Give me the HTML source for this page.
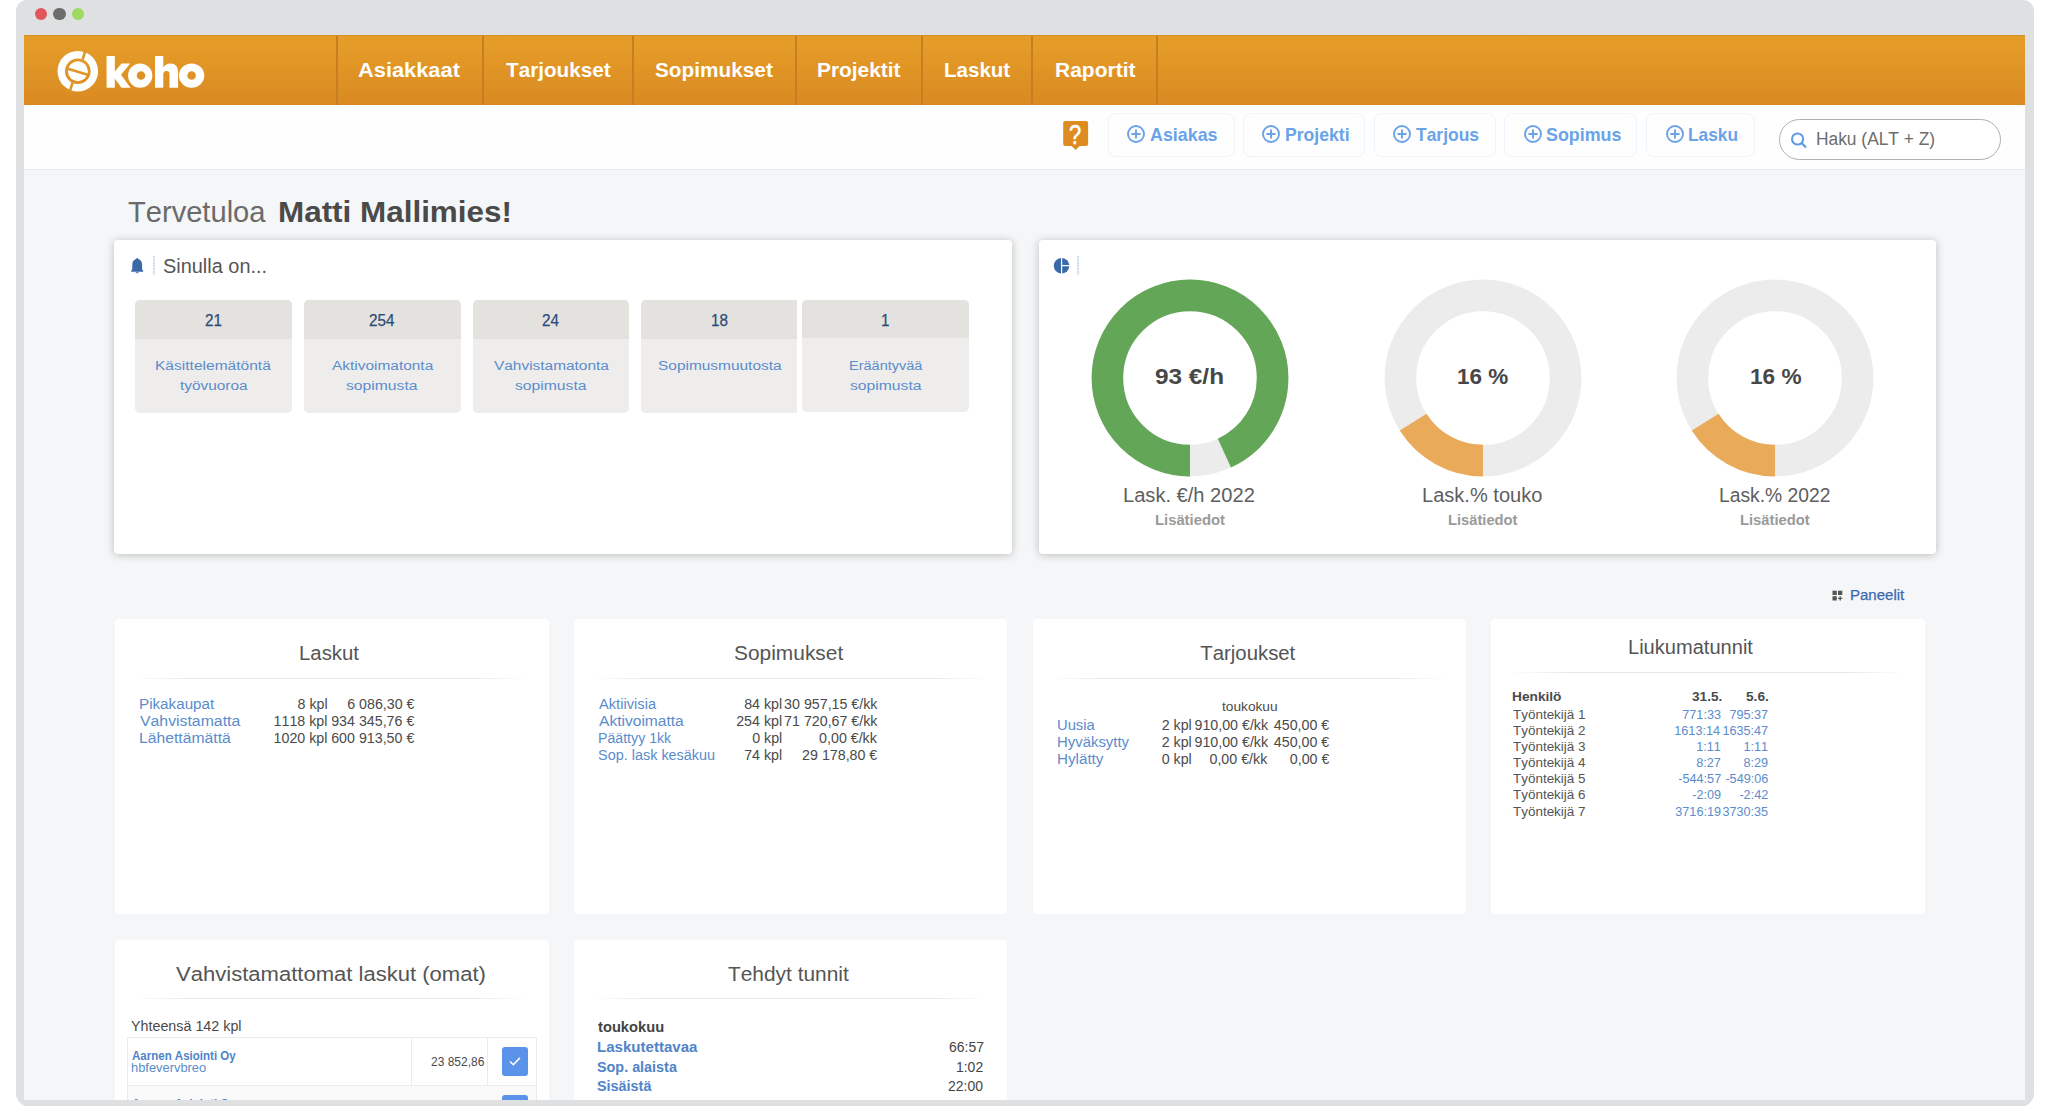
<!DOCTYPE html>
<html><head><meta charset="utf-8"><title>koho</title>
<style>
html,body{margin:0;padding:0;background:#fff;width:2048px;height:1106px;overflow:hidden;position:relative}
.r{position:absolute}
.t{position:absolute;white-space:nowrap;line-height:normal;transform-origin:0 0;font-family:"Liberation Sans",sans-serif;font-kerning:none}
svg.r{overflow:visible}
</style></head><body>
<div class="r" style="left:16px;top:0px;width:2018.2px;height:1107px;background:#dfe0e2;border-radius:11px 11px 14px 14px;"></div>
<div class="r" style="left:34.6px;top:8.0px;width:12.4px;height:12.4px;border-radius:50%;background:#e0565a"></div>
<div class="r" style="left:53.3px;top:8.0px;width:12.4px;height:12.4px;border-radius:50%;background:#6c6d6c"></div>
<div class="r" style="left:72.0px;top:8.0px;width:12.4px;height:12.4px;border-radius:50%;background:#9ed960"></div>
<div class="r" style="left:24px;top:35px;width:2001px;height:1065px;background:#f5f6f7;"></div>
<div class="r" style="left:24px;top:35px;width:2001px;height:70px;background:linear-gradient(#e69e28,#d98a22);"></div>
<div class="r" style="left:24px;top:35px;width:2001px;height:1.2000000000000028px;background:#d48f22;"></div>
<div class="r" style="left:335.9px;top:36px;width:2.0px;height:69px;background:#c57f20;"></div>
<div class="r" style="left:481.6px;top:36px;width:2.0px;height:69px;background:#c57f20;"></div>
<div class="r" style="left:632.2px;top:36px;width:2.0px;height:69px;background:#c57f20;"></div>
<div class="r" style="left:795.2px;top:36px;width:2.0px;height:69px;background:#c57f20;"></div>
<div class="r" style="left:921.4px;top:36px;width:2.0px;height:69px;background:#c57f20;"></div>
<div class="r" style="left:1031.1px;top:36px;width:2.0px;height:69px;background:#c57f20;"></div>
<div class="r" style="left:1156.1px;top:36px;width:2.0px;height:69px;background:#c57f20;"></div>
<div class="r" style="left:24px;top:105px;width:2001px;height:64px;background:#fefefe;"></div>
<div class="r" style="left:24px;top:169px;width:2001px;height:1px;background:#e8e9ea;"></div>
<div class="t" style="left:358.44px;top:58.02px;font-size:20.64px;color:#fff;font-weight:700;transform:scaleX(1.0579);">Asiakkaat</div>
<div class="t" style="left:505.60px;top:58.02px;font-size:20.64px;color:#fff;font-weight:700;transform:scaleX(1.0038);">Tarjoukset</div>
<div class="t" style="left:654.59px;top:58.02px;font-size:20.64px;color:#fff;font-weight:700;transform:scaleX(1.0078);">Sopimukset</div>
<div class="t" style="left:817.09px;top:58.02px;font-size:20.64px;color:#fff;font-weight:700;transform:scaleX(1.0111);">Projektit</div>
<div class="t" style="left:944.30px;top:58.02px;font-size:20.64px;color:#fff;font-weight:700;transform:scaleX(0.9954);">Laskut</div>
<div class="t" style="left:1054.58px;top:58.02px;font-size:20.64px;color:#fff;font-weight:700;transform:scaleX(1.0179);">Raportit</div>
<svg class="r" style="left:0;top:0" width="260" height="110" viewBox="0 0 260 110">
<g fill="#fff">
<path fill-rule="evenodd" d="M77.8 50.9a20.3 20.3 0 1 1 0 40.6a20.3 20.3 0 1 1 0-40.6zM77.8 58.4a12.8 12.8 0 1 0 0 25.6a12.8 12.8 0 1 0 0-25.6z"/>
<circle cx="77.9" cy="71.2" r="10"/>
</g>
<g stroke="#e09525" fill="none">
<line x1="67" y1="68.5" x2="88.5" y2="75" stroke-width="2.6"/>
<line x1="85.6" y1="50" x2="82.6" y2="59.5" stroke-width="2.6"/>
<line x1="72.6" y1="82.5" x2="69.6" y2="92" stroke-width="2.6"/>
</g>
<g fill="#fff">
<rect x="106.6" y="56" width="8.2" height="31.7"/>
<path d="M114 72.5 L121.5 63.4 L130.2 63.4 L121 74.8 L130.5 87.7 L121.5 87.7 L114 77.5z"/>
<path fill-rule="evenodd" d="M140.2 63.4a12.15 12.15 0 1 1 0 24.3a12.15 12.15 0 1 1 0-24.3zM141 71.2a4.3 4.3 0 1 0 0 8.6a4.3 4.3 0 1 0 0-8.6z"/>
<rect x="155" y="56" width="8.3" height="31.7"/>
<path d="M162 69 Q165 63.4 170.5 63.4 Q178.1 63.4 178.1 72 L178.1 87.7 L169.5 87.7 L169.5 74 Q169.5 71 166.5 71 Q163.3 71 163.3 74z"/>
<path fill-rule="evenodd" d="M191.6 63.4a12.7 12.15 0 1 1 0 24.3a12.7 12.15 0 1 1 0-24.3zM191.6 71.2a4.3 4.3 0 1 0 0 8.6a4.3 4.3 0 1 0 0-8.6z"/>
</g></svg>
<svg class="r" style="left:1060px;top:118px" width="32" height="36" viewBox="1060 118 32 36">
<path d="M1065.2 121.1h20.9a2 2 0 0 1 2 2v20.9a2 2 0 0 1-2 2h-6.5l-4 3.9l-4-3.9h-6.4a2 2 0 0 1-2-2v-20.9a2 2 0 0 1 2-2z" fill="#de8b22"/>
</svg>
<div class="t" style="left:1069.41px;top:118.81px;font-size:27.62px;color:#fff;transform:scaleX(0.7929);-webkit-text-stroke:0.6px #fff;">?</div>
<div class="r" style="left:1108.1px;top:113.3px;width:126.5px;height:43.39999999999999px;border:1px solid #eef4fb;border-radius:8px;box-sizing:border-box;"></div>
<svg class="r" style="left:1126.4px;top:124.4px" width="20" height="20" viewBox="-10 -10 20 20"><circle r="8" fill="none" stroke="#6aa3e8" stroke-width="1.9"/><path d="M-4.6 0H4.6M0 -4.6V4.6" stroke="#6aa3e8" stroke-width="1.9"/></svg>
<div class="t" style="left:1149.99px;top:124.55px;font-size:17.73px;color:#6aa3e8;font-weight:700;transform:scaleX(1.0077);">Asiakas</div>
<div class="r" style="left:1243px;top:113.3px;width:122.09999999999991px;height:43.39999999999999px;border:1px solid #eef4fb;border-radius:8px;box-sizing:border-box;"></div>
<svg class="r" style="left:1261.0px;top:124.4px" width="20" height="20" viewBox="-10 -10 20 20"><circle r="8" fill="none" stroke="#6aa3e8" stroke-width="1.9"/><path d="M-4.6 0H4.6M0 -4.6V4.6" stroke="#6aa3e8" stroke-width="1.9"/></svg>
<div class="t" style="left:1284.51px;top:124.55px;font-size:17.73px;color:#6aa3e8;font-weight:700;transform:scaleX(0.9937);">Projekti</div>
<div class="r" style="left:1373.5px;top:113.3px;width:122.20000000000005px;height:43.39999999999999px;border:1px solid #eef4fb;border-radius:8px;box-sizing:border-box;"></div>
<svg class="r" style="left:1392.2px;top:124.4px" width="20" height="20" viewBox="-10 -10 20 20"><circle r="8" fill="none" stroke="#6aa3e8" stroke-width="1.9"/><path d="M-4.6 0H4.6M0 -4.6V4.6" stroke="#6aa3e8" stroke-width="1.9"/></svg>
<div class="t" style="left:1416.20px;top:124.55px;font-size:17.73px;color:#6aa3e8;font-weight:700;transform:scaleX(0.9841);">Tarjous</div>
<div class="r" style="left:1504.3px;top:113.3px;width:133.10000000000014px;height:43.39999999999999px;border:1px solid #eef4fb;border-radius:8px;box-sizing:border-box;"></div>
<svg class="r" style="left:1522.7px;top:124.4px" width="20" height="20" viewBox="-10 -10 20 20"><circle r="8" fill="none" stroke="#6aa3e8" stroke-width="1.9"/><path d="M-4.6 0H4.6M0 -4.6V4.6" stroke="#6aa3e8" stroke-width="1.9"/></svg>
<div class="t" style="left:1545.89px;top:124.55px;font-size:17.73px;color:#6aa3e8;font-weight:700;transform:scaleX(1.0068);">Sopimus</div>
<div class="r" style="left:1645.9px;top:113.3px;width:108.89999999999986px;height:43.39999999999999px;border:1px solid #eef4fb;border-radius:8px;box-sizing:border-box;"></div>
<svg class="r" style="left:1664.6px;top:124.4px" width="20" height="20" viewBox="-10 -10 20 20"><circle r="8" fill="none" stroke="#6aa3e8" stroke-width="1.9"/><path d="M-4.6 0H4.6M0 -4.6V4.6" stroke="#6aa3e8" stroke-width="1.9"/></svg>
<div class="t" style="left:1687.82px;top:124.55px;font-size:17.73px;color:#6aa3e8;font-weight:700;transform:scaleX(0.9776);">Lasku</div>
<div class="r" style="left:1779px;top:118.7px;width:222.29999999999995px;height:40.999999999999986px;border:1.6px solid #b0b0b0;border-radius:21px;box-sizing:border-box;background:#fff;"></div>
<svg class="r" style="left:1787.5px;top:128.5px" width="22" height="22" viewBox="0 0 22 22"><circle cx="9.6" cy="10" r="5.6" fill="none" stroke="#5d9be6" stroke-width="2"/><path d="M13.6 14L18 18.6" stroke="#5d9be6" stroke-width="2.2"/></svg>
<div class="t" style="left:1815.86px;top:128.29px;font-size:18.46px;color:#6d6d6d;transform:scaleX(0.9416);">Haku (ALT + Z)</div>
<div class="t" style="left:128.21px;top:195.20px;font-size:29.51px;color:#6a6a6a;transform:scaleX(0.9863);">Tervetuloa</div>
<div class="t" style="left:278.17px;top:195.20px;font-size:29.51px;color:#4a4a4a;font-weight:700;transform:scaleX(1.0651);">Matti Mallimies!</div>
<div class="r" style="left:114.4px;top:239.9px;width:897.6px;height:313.80000000000007px;background:#fff;border-radius:4px;box-shadow:0 1px 9px rgba(0,0,0,.24);"></div>
<svg class="r" style="left:128px;top:255px" width="20" height="22" viewBox="128 255 20 22">
<path d="M137.2 258.1c.6 0 1 .4 1 .9c2.4.7 3.9 2.9 3.9 5.4v4.6l1.4 2.8h-12.6l1.4-2.8v-4.6c0-2.5 1.5-4.7 3.9-5.4c0-.5.4-.9 1-.9z" fill="#3a69a8"/>
<path d="M135.5 272.2h3.4a1.7 1.1 0 0 1-3.4 0z" fill="#3a69a8"/>
</svg>
<div class="r" style="left:153px;top:256px;width:2px;height:18.600000000000023px;background:repeating-linear-gradient(#d0ddf2 0 2px,#edf2fa 2px 3px);"></div>
<div class="t" style="left:162.97px;top:255.71px;font-size:19.33px;color:#555;transform:scaleX(1.0306);">Sinulla on...</div>
<div class="r" style="left:135.1px;top:300.3px;width:157.29999999999998px;height:112.80000000000001px;background:#eeedeb;border-radius:5px;overflow:hidden;"></div>
<div class="r" style="left:135.1px;top:300.3px;width:157.29999999999998px;height:38.30000000000001px;background:#e3e2de;border-radius:5px 5px 0 0;"></div>
<div class="t" style="left:204.76px;top:311.10px;font-size:16.57px;color:#2d4b78;transform:scaleX(0.9200);-webkit-text-stroke:0.25px #2d4b78;">21</div>
<div class="t" style="left:154.86px;top:358.04px;font-size:13.66px;color:#5b8ccb;transform:scaleX(1.1386);">Käsittelemätöntä</div>
<div class="t" style="left:179.60px;top:377.64px;font-size:13.66px;color:#5b8ccb;transform:scaleX(1.1250);">työvuoroa</div>
<div class="r" style="left:303.5px;top:300.3px;width:157.7px;height:112.80000000000001px;background:#eeedeb;border-radius:5px;overflow:hidden;"></div>
<div class="r" style="left:303.5px;top:300.3px;width:157.7px;height:38.30000000000001px;background:#e3e2de;border-radius:5px 5px 0 0;"></div>
<div class="t" style="left:368.61px;top:311.10px;font-size:16.57px;color:#2d4b78;transform:scaleX(0.9200);-webkit-text-stroke:0.25px #2d4b78;">254</div>
<div class="t" style="left:331.70px;top:358.04px;font-size:13.66px;color:#5b8ccb;transform:scaleX(1.1300);">Aktivoimatonta</div>
<div class="t" style="left:345.85px;top:377.64px;font-size:13.66px;color:#5b8ccb;transform:scaleX(1.1492);">sopimusta</div>
<div class="r" style="left:472.5px;top:300.3px;width:156.89999999999998px;height:112.80000000000001px;background:#eeedeb;border-radius:5px;overflow:hidden;"></div>
<div class="r" style="left:472.5px;top:300.3px;width:156.89999999999998px;height:38.30000000000001px;background:#e3e2de;border-radius:5px 5px 0 0;"></div>
<div class="t" style="left:542.41px;top:311.10px;font-size:16.57px;color:#2d4b78;transform:scaleX(0.9200);-webkit-text-stroke:0.25px #2d4b78;">24</div>
<div class="t" style="left:493.70px;top:358.04px;font-size:13.66px;color:#5b8ccb;transform:scaleX(1.1294);">Vahvistamatonta</div>
<div class="t" style="left:515.05px;top:377.64px;font-size:13.66px;color:#5b8ccb;transform:scaleX(1.1492);">sopimusta</div>
<div class="r" style="left:641.3px;top:300.3px;width:155.60000000000002px;height:112.80000000000001px;background:#eeedeb;border-radius:5px 0 0 5px;overflow:hidden;"></div>
<div class="r" style="left:641.3px;top:300.3px;width:155.60000000000002px;height:38.30000000000001px;background:#e3e2de;border-radius:5px 0 0 0;"></div>
<div class="t" style="left:711.16px;top:311.10px;font-size:16.57px;color:#2d4b78;transform:scaleX(0.9200);-webkit-text-stroke:0.25px #2d4b78;">18</div>
<div class="t" style="left:658.07px;top:358.04px;font-size:13.66px;color:#5b8ccb;transform:scaleX(1.1306);">Sopimusmuutosta</div>
<div class="r" style="left:802.4px;top:300.3px;width:166.89999999999998px;height:112.0px;background:#eeedeb;border-radius:5px;overflow:hidden;"></div>
<div class="r" style="left:802.4px;top:300.3px;width:166.89999999999998px;height:37.599999999999966px;background:#e3e2de;border-radius:5px 5px 0 0;"></div>
<div class="t" style="left:880.60px;top:311.10px;font-size:16.57px;color:#2d4b78;transform:scaleX(0.9200);-webkit-text-stroke:0.25px #2d4b78;">1</div>
<div class="t" style="left:848.64px;top:358.04px;font-size:13.66px;color:#5b8ccb;transform:scaleX(1.0632);">Erääntyvää</div>
<div class="t" style="left:849.65px;top:377.64px;font-size:13.66px;color:#5b8ccb;transform:scaleX(1.1492);">sopimusta</div>
<div class="r" style="left:1038.6px;top:239.8px;width:897.6000000000001px;height:313.8px;background:#fff;border-radius:4px;box-shadow:0 1px 9px rgba(0,0,0,.24);"></div>
<svg class="r" style="left:1050px;top:255px" width="22" height="22" viewBox="1050 255 22 22">
<path d="M1061 257.92A7.8 7.8 0 0 0 1061 273.48Z" fill="#3a69a8"/>
<path d="M1062.2 257.95A7.8 7.8 0 0 1 1069.37 265H1062.2Z" fill="#3a69a8"/>
<path d="M1062.2 266.2H1069.3A7.8 7.8 0 0 1 1062.2 273.45Z" fill="#3a69a8"/>
</svg>
<div class="r" style="left:1077px;top:256px;width:2px;height:18.600000000000023px;background:repeating-linear-gradient(#d0ddf2 0 2px,#edf2fa 2px 3px);"></div>
<svg class="r" style="left:1089.9px;top:277.6px" width="200" height="200" viewBox="-100 -100 200 200"><circle r="82.6" fill="none" stroke="#ececec" stroke-width="31.6"/><circle r="82.6" fill="none" stroke="#64a657" stroke-width="31.6" stroke-dasharray="482.66 518.99" transform="rotate(90)"/></svg>
<div class="t" style="left:1154.88px;top:363.87px;font-size:21.80px;color:#474747;font-weight:700;transform:scaleX(1.1167);">93 €/h</div>
<div class="t" style="left:1123.27px;top:484.11px;font-size:19.77px;color:#5e5e5e;transform:scaleX(1.0165);">Lask. €/h 2022</div>
<div class="t" style="left:1154.98px;top:512.05px;font-size:14.53px;color:#9a9a9a;font-weight:700;transform:scaleX(1.0194);">Lisätiedot</div>
<svg class="r" style="left:1383.0px;top:277.5px" width="200" height="200" viewBox="-100 -100 200 200"><circle r="82.6" fill="none" stroke="#ececec" stroke-width="31.6"/><circle r="82.6" fill="none" stroke="#e9aa5a" stroke-width="31.6" stroke-dasharray="83.04 518.99" transform="rotate(90)"/></svg>
<div class="t" style="left:1457.07px;top:363.87px;font-size:21.80px;color:#474747;font-weight:700;transform:scaleX(1.0292);">16 %</div>
<div class="t" style="left:1421.97px;top:484.11px;font-size:19.77px;color:#5e5e5e;transform:scaleX(1.0147);">Lask.% touko</div>
<div class="t" style="left:1447.89px;top:512.05px;font-size:14.53px;color:#9a9a9a;font-weight:700;transform:scaleX(1.0134);">Lisätiedot</div>
<svg class="r" style="left:1675.4px;top:277.5px" width="200" height="200" viewBox="-100 -100 200 200"><circle r="82.6" fill="none" stroke="#ececec" stroke-width="31.6"/><circle r="82.6" fill="none" stroke="#e9aa5a" stroke-width="31.6" stroke-dasharray="83.04 518.99" transform="rotate(90)"/></svg>
<div class="t" style="left:1749.96px;top:363.87px;font-size:21.80px;color:#474747;font-weight:700;transform:scaleX(1.0375);">16 %</div>
<div class="t" style="left:1719.45px;top:484.11px;font-size:19.77px;color:#5e5e5e;transform:scaleX(0.9757);">Lask.% 2022</div>
<div class="t" style="left:1740.48px;top:512.05px;font-size:14.53px;color:#9a9a9a;font-weight:700;transform:scaleX(1.0164);">Lisätiedot</div>
<svg class="r" style="left:1830.7px;top:588.8px" width="14" height="14" viewBox="0 0 14 14"><rect x="1.5" y="1.7" width="4.3" height="4.3" fill="#555"/><rect x="7" y="1.7" width="4.3" height="4.3" fill="#555"/><rect x="1.5" y="7.2" width="4.3" height="4.3" fill="#555"/><path d="M9.2 7.2v4.3M7 9.35h4.3" stroke="#555" stroke-width="1.3"/></svg>
<div class="t" style="left:1849.75px;top:587.01px;font-size:14.24px;color:#3a69b0;transform:scaleX(1.0540);-webkit-text-stroke:0.25px #3a69b0;">Paneelit</div>
<div class="r" style="left:114.5px;top:618.8px;width:434.29999999999995px;height:295.70000000000005px;background:#fff;border-radius:4px;"></div>
<div class="r" style="left:573.9px;top:618.8px;width:433.30000000000007px;height:295.70000000000005px;background:#fff;border-radius:4px;"></div>
<div class="r" style="left:1032.8px;top:618.8px;width:433.29999999999995px;height:295.70000000000005px;background:#fff;border-radius:4px;"></div>
<div class="r" style="left:1491px;top:618.8px;width:434.29999999999995px;height:295.70000000000005px;background:#fff;border-radius:4px;"></div>
<div class="r" style="left:114.5px;top:939.9px;width:434.29999999999995px;height:190.10000000000002px;background:#fff;border-radius:4px;"></div>
<div class="r" style="left:573.9px;top:939.9px;width:433.30000000000007px;height:190.10000000000002px;background:#fff;border-radius:4px;"></div>
<div class="t" style="left:299.00px;top:641.78px;font-size:20.35px;color:#555;">Laskut</div>
<div class="t" style="left:733.77px;top:641.78px;font-size:20.35px;color:#555;transform:scaleX(1.0276);">Sopimukset</div>
<div class="t" style="left:1200.30px;top:641.78px;font-size:20.35px;color:#555;">Tarjoukset</div>
<div class="t" style="left:1627.83px;top:636.08px;font-size:20.35px;color:#555;transform:scaleX(0.9864);">Liukumatunnit</div>
<div class="r" style="left:130.5px;top:677.5px;width:400.5px;height:1.2999999999999545px;background:linear-gradient(90deg,rgba(230,230,230,0),#e8e8e8 15%,#e8e8e8 85%,rgba(230,230,230,0));"></div>
<div class="r" style="left:590px;top:677.5px;width:400px;height:1.2999999999999545px;background:linear-gradient(90deg,rgba(230,230,230,0),#e8e8e8 15%,#e8e8e8 85%,rgba(230,230,230,0));"></div>
<div class="r" style="left:1049px;top:677.5px;width:400px;height:1.2999999999999545px;background:linear-gradient(90deg,rgba(230,230,230,0),#e8e8e8 15%,#e8e8e8 85%,rgba(230,230,230,0));"></div>
<div class="r" style="left:1507px;top:671.5px;width:401px;height:1.2999999999999545px;background:linear-gradient(90deg,rgba(230,230,230,0),#e8e8e8 15%,#e8e8e8 85%,rgba(230,230,230,0));"></div>
<div class="t" style="left:139.43px;top:696.41px;font-size:14.24px;color:#5b8ccb;transform:scaleX(1.0681);">Pikakaupat</div>
<div class="t" style="left:297.60px;top:696.41px;font-size:14.24px;color:#4a4a4a;">8 kpl</div>
<div class="t" style="left:347.20px;top:696.41px;font-size:14.24px;color:#4a4a4a;">6 086,30 €</div>
<div class="t" style="left:139.60px;top:713.31px;font-size:14.24px;color:#5b8ccb;transform:scaleX(1.1111);">Vahvistamatta</div>
<div class="t" style="left:273.60px;top:713.31px;font-size:14.24px;color:#4a4a4a;">1118 kpl</div>
<div class="t" style="left:331.20px;top:713.31px;font-size:14.24px;color:#4a4a4a;">934 345,76 €</div>
<div class="t" style="left:139.40px;top:730.21px;font-size:14.24px;color:#5b8ccb;transform:scaleX(1.1049);">Lähettämättä</div>
<div class="t" style="left:273.60px;top:730.21px;font-size:14.24px;color:#4a4a4a;">1020 kpl</div>
<div class="t" style="left:331.20px;top:730.21px;font-size:14.24px;color:#4a4a4a;">600 913,50 €</div>
<div class="t" style="left:599.40px;top:696.11px;font-size:14.24px;color:#5b8ccb;transform:scaleX(1.0309);">Aktiivisia</div>
<div class="t" style="left:744.20px;top:696.11px;font-size:14.24px;color:#4a4a4a;">84 kpl</div>
<div class="t" style="left:784.10px;top:696.11px;font-size:14.24px;color:#4a4a4a;">30 957,15 €/kk</div>
<div class="t" style="left:599.40px;top:713.21px;font-size:14.24px;color:#5b8ccb;transform:scaleX(1.0935);">Aktivoimatta</div>
<div class="t" style="left:736.20px;top:713.21px;font-size:14.24px;color:#4a4a4a;">254 kpl</div>
<div class="t" style="left:784.10px;top:713.21px;font-size:14.24px;color:#4a4a4a;">71 720,67 €/kk</div>
<div class="t" style="left:598.41px;top:730.31px;font-size:14.24px;color:#5b8ccb;transform:scaleX(0.9944);">Päättyy 1kk</div>
<div class="t" style="left:752.20px;top:730.31px;font-size:14.24px;color:#4a4a4a;">0 kpl</div>
<div class="t" style="left:819.10px;top:730.31px;font-size:14.24px;color:#4a4a4a;">0,00 €/kk</div>
<div class="t" style="left:598.39px;top:747.41px;font-size:14.24px;color:#5b8ccb;transform:scaleX(1.0140);">Sop. lask kesäkuu</div>
<div class="t" style="left:744.20px;top:747.41px;font-size:14.24px;color:#4a4a4a;">74 kpl</div>
<div class="t" style="left:802.10px;top:747.41px;font-size:14.24px;color:#4a4a4a;">29 178,80 €</div>
<div class="t" style="left:1222.30px;top:698.64px;font-size:13.10px;color:#4a4a4a;transform:scaleX(1.0462);">toukokuu</div>
<div class="t" style="left:1056.96px;top:716.51px;font-size:14.24px;color:#5b8ccb;transform:scaleX(1.0371);">Uusia</div>
<div class="t" style="left:1161.70px;top:716.51px;font-size:14.24px;color:#4a4a4a;">2 kpl</div>
<div class="t" style="left:1194.50px;top:716.51px;font-size:14.24px;color:#4a4a4a;">910,00 €/kk</div>
<div class="t" style="left:1273.80px;top:716.51px;font-size:14.24px;color:#4a4a4a;">450,00 €</div>
<div class="t" style="left:1056.95px;top:733.51px;font-size:14.24px;color:#5b8ccb;transform:scaleX(1.0471);">Hyväksytty</div>
<div class="t" style="left:1161.70px;top:733.51px;font-size:14.24px;color:#4a4a4a;">2 kpl</div>
<div class="t" style="left:1194.50px;top:733.51px;font-size:14.24px;color:#4a4a4a;">910,00 €/kk</div>
<div class="t" style="left:1273.80px;top:733.51px;font-size:14.24px;color:#4a4a4a;">450,00 €</div>
<div class="t" style="left:1056.93px;top:750.51px;font-size:14.24px;color:#5b8ccb;transform:scaleX(1.0674);">Hylätty</div>
<div class="t" style="left:1161.70px;top:750.51px;font-size:14.24px;color:#4a4a4a;">0 kpl</div>
<div class="t" style="left:1209.50px;top:750.51px;font-size:14.24px;color:#4a4a4a;">0,00 €/kk</div>
<div class="t" style="left:1289.80px;top:750.51px;font-size:14.24px;color:#4a4a4a;">0,00 €</div>
<div class="t" style="left:1511.52px;top:690.36px;font-size:12.65px;color:#4a4a4a;font-weight:700;transform:scaleX(1.0841);">Henkilö</div>
<div class="t" style="left:1691.92px;top:690.36px;font-size:12.65px;color:#4a4a4a;font-weight:700;transform:scaleX(1.0769);">31.5.</div>
<div class="t" style="left:1746.32px;top:690.36px;font-size:12.65px;color:#4a4a4a;font-weight:700;transform:scaleX(1.0842);">5.6.</div>
<div class="t" style="left:1513.30px;top:707.56px;font-size:12.65px;color:#555;transform:scaleX(1.0640);">Työntekijä 1</div>
<div class="t" style="left:1682.30px;top:707.56px;font-size:12.65px;color:#5b8ccb;">771:33</div>
<div class="t" style="left:1729.40px;top:707.56px;font-size:12.65px;color:#5b8ccb;">795:37</div>
<div class="t" style="left:1513.30px;top:723.74px;font-size:12.65px;color:#555;transform:scaleX(1.0640);">Työntekijä 2</div>
<div class="t" style="left:1674.30px;top:723.74px;font-size:12.65px;color:#5b8ccb;">1613:14</div>
<div class="t" style="left:1722.40px;top:723.74px;font-size:12.65px;color:#5b8ccb;">1635:47</div>
<div class="t" style="left:1513.30px;top:739.92px;font-size:12.65px;color:#555;transform:scaleX(1.0640);">Työntekijä 3</div>
<div class="t" style="left:1696.30px;top:739.92px;font-size:12.65px;color:#5b8ccb;">1:11</div>
<div class="t" style="left:1743.40px;top:739.92px;font-size:12.65px;color:#5b8ccb;">1:11</div>
<div class="t" style="left:1513.30px;top:756.10px;font-size:12.65px;color:#555;transform:scaleX(1.0640);">Työntekijä 4</div>
<div class="t" style="left:1696.30px;top:756.10px;font-size:12.65px;color:#5b8ccb;">8:27</div>
<div class="t" style="left:1743.40px;top:756.10px;font-size:12.65px;color:#5b8ccb;">8:29</div>
<div class="t" style="left:1513.30px;top:772.28px;font-size:12.65px;color:#555;transform:scaleX(1.0640);">Työntekijä 5</div>
<div class="t" style="left:1678.30px;top:772.28px;font-size:12.65px;color:#5b8ccb;">-544:57</div>
<div class="t" style="left:1725.40px;top:772.28px;font-size:12.65px;color:#5b8ccb;">-549:06</div>
<div class="t" style="left:1513.30px;top:788.46px;font-size:12.65px;color:#555;transform:scaleX(1.0640);">Työntekijä 6</div>
<div class="t" style="left:1692.30px;top:788.46px;font-size:12.65px;color:#5b8ccb;">-2:09</div>
<div class="t" style="left:1739.40px;top:788.46px;font-size:12.65px;color:#5b8ccb;">-2:42</div>
<div class="t" style="left:1513.30px;top:804.64px;font-size:12.65px;color:#555;transform:scaleX(1.0640);">Työntekijä 7</div>
<div class="t" style="left:1675.30px;top:804.64px;font-size:12.65px;color:#5b8ccb;">3716:19</div>
<div class="t" style="left:1722.40px;top:804.64px;font-size:12.65px;color:#5b8ccb;">3730:35</div>
<div class="t" style="left:175.50px;top:962.78px;font-size:20.35px;color:#555;transform:scaleX(1.0835);">Vahvistamattomat laskut (omat)</div>
<div class="t" style="left:728.30px;top:962.78px;font-size:20.35px;color:#555;transform:scaleX(1.0263);">Tehdyt tunnit</div>
<div class="r" style="left:130.5px;top:997.5px;width:400.5px;height:1.2999999999999545px;background:linear-gradient(90deg,rgba(230,230,230,0),#e8e8e8 15%,#e8e8e8 85%,rgba(230,230,230,0));"></div>
<div class="r" style="left:590px;top:997.5px;width:400px;height:1.2999999999999545px;background:linear-gradient(90deg,rgba(230,230,230,0),#e8e8e8 15%,#e8e8e8 85%,rgba(230,230,230,0));"></div>
<div class="t" style="left:130.60px;top:1018.41px;font-size:14.24px;color:#4a4a4a;transform:scaleX(1.0046);">Yhteensä 142 kpl</div>
<div class="r" style="left:127.2px;top:1037.2px;width:409.8px;height:92.79999999999995px;border:1px solid #e8ecf0;box-sizing:border-box;"></div>
<div class="r" style="left:411.2px;top:1037.2px;width:1.0px;height:92.79999999999995px;background:#e8ecf0;"></div>
<div class="r" style="left:487.4px;top:1037.2px;width:1.0px;height:92.79999999999995px;background:#e8ecf0;"></div>
<div class="r" style="left:127.2px;top:1085px;width:409.8px;height:1px;background:#e8ecf0;"></div>
<div class="r" style="left:128.2px;top:1086px;width:407.8px;height:44px;background:#fafafa;"></div>
<div class="r" style="left:412.2px;top:1086px;width:75.19999999999999px;height:44px;background:#fafafa;"></div>
<div class="t" style="left:131.60px;top:1047.56px;font-size:13.08px;color:#4f84c9;font-weight:700;transform:scaleX(0.8805);">Aarnen Asiointi Oy</div>
<div class="t" style="left:130.54px;top:1060.85px;font-size:12.21px;color:#5b8ccb;transform:scaleX(1.0557);">hbfevervbreo</div>
<div class="t" style="left:431.40px;top:1053.70px;font-size:13.37px;color:#4a4a4a;transform:scaleX(0.8966);">23 852,86</div>
<div class="r" style="left:501.9px;top:1047.3px;width:25.800000000000068px;height:28.5px;background:#5b93ea;border-radius:3px;"></div>
<svg class="r" style="left:505px;top:1051px" width="20" height="20" viewBox="0 0 20 20"><path d="M5 10.5l3.3 3.2l6.6-6.8" fill="none" stroke="#fff" stroke-width="1.6"/></svg>
<div class="r" style="left:501.9px;top:1094.6px;width:25.800000000000068px;height:25.40000000000009px;background:#5b93ea;border-radius:3px;"></div>
<div class="t" style="left:131.60px;top:1095.56px;font-size:13.08px;color:#4f84c9;font-weight:700;transform:scaleX(0.8805);">Aarnen Asiointi Oy</div>
<div class="t" style="left:598.20px;top:1018.67px;font-size:13.95px;color:#444;font-weight:700;transform:scaleX(1.0548);">toukokuu</div>
<div class="t" style="left:597.12px;top:1038.57px;font-size:13.95px;color:#4f84c9;font-weight:700;transform:scaleX(1.0804);">Laskutettavaa</div>
<div class="t" style="left:949.00px;top:1038.57px;font-size:13.95px;color:#444;">66:57</div>
<div class="t" style="left:597.17px;top:1058.52px;font-size:13.95px;color:#4f84c9;font-weight:700;transform:scaleX(1.0312);">Sop. alaista</div>
<div class="t" style="left:956.00px;top:1058.52px;font-size:13.95px;color:#444;">1:02</div>
<div class="t" style="left:597.17px;top:1078.47px;font-size:13.95px;color:#4f84c9;font-weight:700;transform:scaleX(1.0327);">Sisäistä</div>
<div class="t" style="left:948.00px;top:1078.47px;font-size:13.95px;color:#444;">22:00</div>
<div class="r" style="left:24px;top:1100px;width:2001px;height:6px;background:#dfe0e2;"></div>
</body></html>
